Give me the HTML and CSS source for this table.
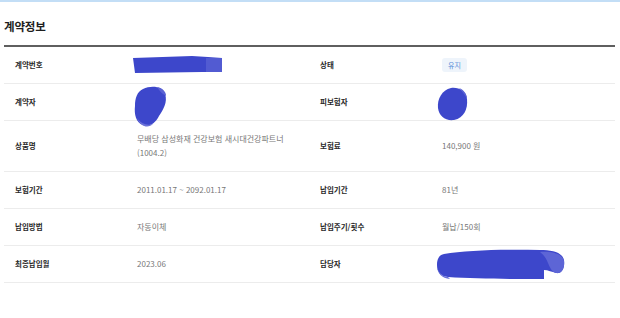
FILE: index.html
```html
<!DOCTYPE html>
<html lang="ko">
<head>
<meta charset="utf-8">
<link rel="stylesheet" href="styles.css">
</head>
<body>
<div class="topline"></div>
<section class="wrap">
  <h2 class="title">계약정보</h2>
  <div class="table">
    <div class="row">
      <div class="cell label">계약번호</div>
      <div class="cell value mark-cell">
        <svg class="mark mark-no" width="92" height="20" viewBox="0 0 92 20">
          <path d="M1 3 L60 1 L76 2 L90 3 L90 17 L70 17 L3 18 Z" fill="#3d47cb"/>
          <path d="M74 3 L90 3 L90 17 L74 17 Z" fill="#525bd2"/>
        </svg>
      </div>
      <div class="cell label">상태</div>
      <div class="cell value"><span class="badge">유지</span></div>
    </div>
    <div class="row">
      <div class="cell label">계약자</div>
      <div class="cell value mark-cell">
        <svg class="mark mark-contractor" width="36" height="42" viewBox="0 0 36 42">
          <path d="M10 3 C18 -1 30 0 32 8 C35 16 30 24 26 30 C22 38 16 41 10 39 C3 37 1 28 2 20 C2 12 4 6 10 3 Z" fill="#3d47cb"/>
          <path d="M24 1 C30 2 33 6 33 10 C30 8 27 6 24 1 Z" fill="#5a62d4"/>
          <path d="M4 32 C8 38 14 40 20 38 C16 42 8 42 4 32 Z" fill="#6a71d8"/>
        </svg>
      </div>
      <div class="cell label">피보험자</div>
      <div class="cell value mark-cell">
        <svg class="mark mark-insured" width="32" height="34" viewBox="0 0 32 34">
          <path d="M14 1 C22 0 29 4 30 12 C31 22 27 31 17 33 C8 34 2 29 1 21 C0 12 5 3 14 1 Z" fill="#3d47cb"/>
          <path d="M22 1 C27 3 30 7 30 12 C28 8 25 4 22 1 Z" fill="#5a62d4"/>
        </svg>
      </div>
    </div>
    <div class="row">
      <div class="cell label">상품명</div>
      <div class="cell value">무배당 삼성화재 건강보험 새시대건강파트너<br>(1004.2)</div>
      <div class="cell label">보험료</div>
      <div class="cell value">140,900 원</div>
    </div>
    <div class="row">
      <div class="cell label">보험기간</div>
      <div class="cell value">2011.01.17 ~ 2092.01.17</div>
      <div class="cell label">납입기간</div>
      <div class="cell value">81년</div>
    </div>
    <div class="row">
      <div class="cell label">납입방법</div>
      <div class="cell value">자동이체</div>
      <div class="cell label">납입주기/횟수</div>
      <div class="cell value">월납/150회</div>
    </div>
    <div class="row">
      <div class="cell label">최종납입월</div>
      <div class="cell value">2023.06</div>
      <div class="cell label">담당자</div>
      <div class="cell value mark-cell">
        <svg class="mark mark-manager" width="130" height="33" viewBox="0 0 130 33">
          <path d="M8 6 C30 2 70 1 104 2 C116 2 126 4 128 12 C129 20 126 26 120 25 C116 24 112 22 108 22 L108 31 C80 31 40 31 12 29 C4 28 1 24 1 17 C1 11 3 7 8 6 Z" fill="#3d47cb"/>
          <path d="M104 4 C116 3 127 6 128 13 C129 21 125 26 120 25 C116 24 114 20 112 15 C110 10 108 7 104 4 Z" fill="#5d65d6"/>
          <path d="M1 16 C1 22 4 28 12 29 L14 31 C6 30 1 26 1 16 Z" fill="#6a71d8"/>
        </svg>
      </div>
    </div>
  </div>
</section>
</body>
</html>
```
FILE: styles.css
```css
html, body {
  margin: 0;
  padding: 0;
  background: #ffffff;
}
body {
  font-family: "Noto Sans CJK KR", "Noto Sans", sans-serif;
  color: #222;
}
.topline {
  height: 2px;
  background: #c3def6;
}
.wrap {
  width: 611px;
  padding: 0 4px;
}
.title {
  margin: 0;
  padding-top: 16px;
  height: 27px;
  font-size: 11.5px;
  line-height: 17px;
  font-weight: 700;
  color: #1e1e1e;
  letter-spacing: -0.2px;
}
.table {
  border-top: 2px solid #5f5f5f;
}
.row {
  display: grid;
  grid-template-columns: 122px 183px 122px 184px;
  border-bottom: 1px solid #ececec;
  align-items: center;
}
.cell {
  padding: 11px 11px;
  font-size: 7.5px;
  line-height: 14px;
  min-height: 14px;
}
.label {
  font-weight: 700;
  color: #2a2a2a;
}
.value {
  color: #777777;
  font-weight: 400;
  font-size: 8px;
}
.badge {
  display: inline-block;
  background: #eef4fb;
  color: #5b8fd8;
  border-radius: 3px;
  padding: 0 6px;
  line-height: 14px;
  font-size: 7px;
}
.mark-cell {
  position: relative;
}
.mark {
  position: absolute;
  overflow: visible;
}
.mark-no {
  left: 6px;
  top: 8px;
}
.mark-contractor {
  left: 7px;
  top: 2px;
}
.mark-insured {
  left: 6px;
  top: 3px;
}
.mark-manager {
  left: 5px;
  top: 2px;
}
```
